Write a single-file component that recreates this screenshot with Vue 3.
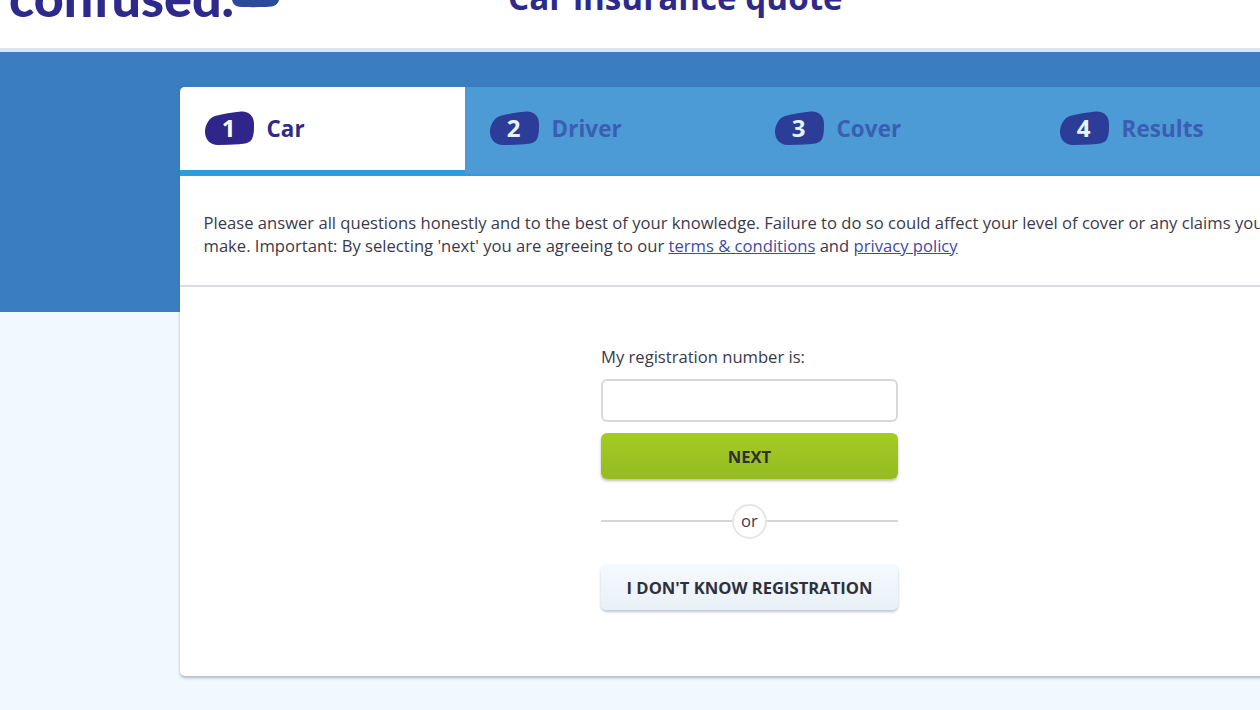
<script setup>
const steps = [
  { id: 1, label: "Car", active: true },
  { id: 2, label: "Driver" },
  { id: 3, label: "Cover" },
  { id: 4, label: "Results" },
];
const blob =
  "M10 5C18 3 28 1 36 .5C44 0 49 5 49 13C49 19 49 24 47 28C45 32 40 33 34 33.2C27 33.6 20 34 13 34C5 34 0 28 0 21C0 14 4 7 10 5Z";
</script>

<template>
  <div class="page">
    <header class="site-header">
      <div class="logo">
        <span class="logo-word">confused.</span>
        <svg class="logo-blob" width="47" height="8" viewBox="0 0 47 8">
          <path d="M0 0H47C46 4 43 6.500 37 6.800C27 7.300 14 7.300 7 6.800C3 6.300 1 4 0 0Z" fill="#2b4a9c" />
        </svg>
      </div>
      <h1 class="quote-title">Car insurance quote</h1>
    </header>

    <main class="band">
      <section class="card">
        <nav class="tabs">
          <div
            v-for="step in steps"
            :key="step.id"
            class="tab"
            :class="{ 'tab--active': step.active }"
          >
            <svg class="tab-num" width="49" height="34" viewBox="0 0 49 34">
              <path :d="blob" />
              <text x="23.500" y="25.500">{{ step.id }}</text>
            </svg>
            <span class="tab-label">{{ step.label }}</span>
          </div>
        </nav>

        <div class="intro">
          <p>
            Please answer all questions honestly and to the best of your knowledge. Failure to do so could affect your level of cover or any claims you
            make. Important: By selecting 'next' you are agreeing to our
            <a href="#">terms &amp; conditions</a> and <a href="#">privacy policy</a>
          </p>
        </div>

        <form class="reg-form" @submit.prevent>
          <label class="reg-label" for="reg">My registration number is:</label>
          <input id="reg" class="reg-input" type="text" />
          <button class="btn btn--next" type="submit">NEXT</button>
          <div class="or-row">
            <span class="or-badge">or</span>
          </div>
          <button class="btn btn--plain" type="button">I DON'T KNOW REGISTRATION</button>
        </form>
      </section>
    </main>
  </div>
</template>

<style>
html, body { margin: 0; background: #f1f8fe; overflow: hidden; }
</style>

<style scoped>
* { box-sizing: border-box; }
.page {
  width: 1260px;
  height: 710px;
  overflow: hidden;
  font-family: "Open Sans", "Noto Sans", sans-serif;
  color: #3a3a4c;
}

.site-header {
  height: 52px;
  background: #fff;
  border-bottom: 4px solid #d5e8f0;
  display: grid;
  grid-template-columns: 508px 1fr;
  overflow: hidden;
}
.logo { display: flex; align-items: flex-start; padding-left: 9px; height: 48px; }
.logo-word {
  font-family: "Lato", "Open Sans", sans-serif;
  font-size: 52px;
  font-weight: 900;
  line-height: 52px;
  margin-top: -29px;
  color: #2e2a8c;
}
.logo-blob { margin-left: -2px; flex: none; }
.quote-title {
  margin: -18px 0 0;
  font-size: 33.200px;
  line-height: 32px;
  font-weight: 700;
  color: #2e2a8c;
  white-space: nowrap;
}

.band {
  height: 658px;
  padding: 35px 0 0 180px;
  background: linear-gradient(#3a7dc1 260px, #f1f8fe 260px);
}
.card {
  width: 1140px;
  height: 589px;
  background: #fff;
  border-radius: 5px;
  box-shadow: 0 2px 3px rgba(90, 110, 140, .45);
}

.tabs {
  display: grid;
  grid-template-columns: repeat(4, 285px);
  height: 89px;
  background: #4c9ad6;
  border-bottom: 2px solid #2f9bd9;
  border-radius: 5px 0 0 0;
}
.tab {
  display: flex;
  align-items: center;
  gap: 12.500px;
  padding: 0 0 1px 25px;
  height: 87px;
  border-bottom: 4px solid transparent;
}
.tab--active { background: #fff; border-radius: 5px 0 0 0; border-bottom-color: #2f9bd9; }
.tab-num { flex: none; }
.tab-num path { fill: #2b3d97; }
.tab-num text {
  font-family: "Open Sans", sans-serif;
  font-size: 24px;
  font-weight: 700;
  text-anchor: middle;
  fill: #e8f2fb;
}
.tab--active .tab-num path { fill: #30258a; }
.tab--active .tab-num text { fill: #fff; }
.tab-label { font-size: 22.400px; font-weight: 700; color: #3c5db0; letter-spacing: .1px; }
.tab--active .tab-label { color: #2e2a8c; }

.intro { height: 111px; padding: 36px 0 0 23.500px; border-bottom: 2px solid #dcdde0; }
.intro p { margin: 0; font-size: 16.620px; line-height: 22.500px; width: 1100px; }
.intro a { color: #3f4aa8; text-decoration: underline; }

.reg-form { width: 297px; margin: 59px 0 0 421px; display: flex; flex-direction: column; }
.reg-label { font-size: 16.600px; line-height: 22px; }
.reg-input {
  height: 43px;
  margin-top: 11px;
  background: #fff;
  border: 2px solid #d8d8dc;
  border-radius: 6px;
}
.btn {
  height: 46px;
  border: 0;
  border-radius: 6px;
  font-family: inherit;
  font-size: 16.600px;
  font-weight: 700;
  color: #2f2f3a;
}
.btn--next {
  margin-top: 11px;
  background: linear-gradient(#a5cb24, #94bc20);
  box-shadow: 0 2px 3px rgba(90, 100, 90, .4);
}
.or-row {
  height: 2px;
  margin-top: 41px;
  background: #d6d6d8;
  display: flex;
  justify-content: center;
  align-items: center;
}
.or-badge {
  width: 35px;
  height: 35px;
  border: 2px solid #e6e6e8;
  border-radius: 50%;
  background: #fff;
  display: flex;
  align-items: center;
  justify-content: center;
  font-size: 16.600px;
  padding-bottom: 2px;
}
.btn--plain {
  margin-top: 42px;
  background: linear-gradient(#f4f9fd, #e9f1f8);
  box-shadow: 0 2px 3px rgba(90, 110, 140, .4);
}
</style>
